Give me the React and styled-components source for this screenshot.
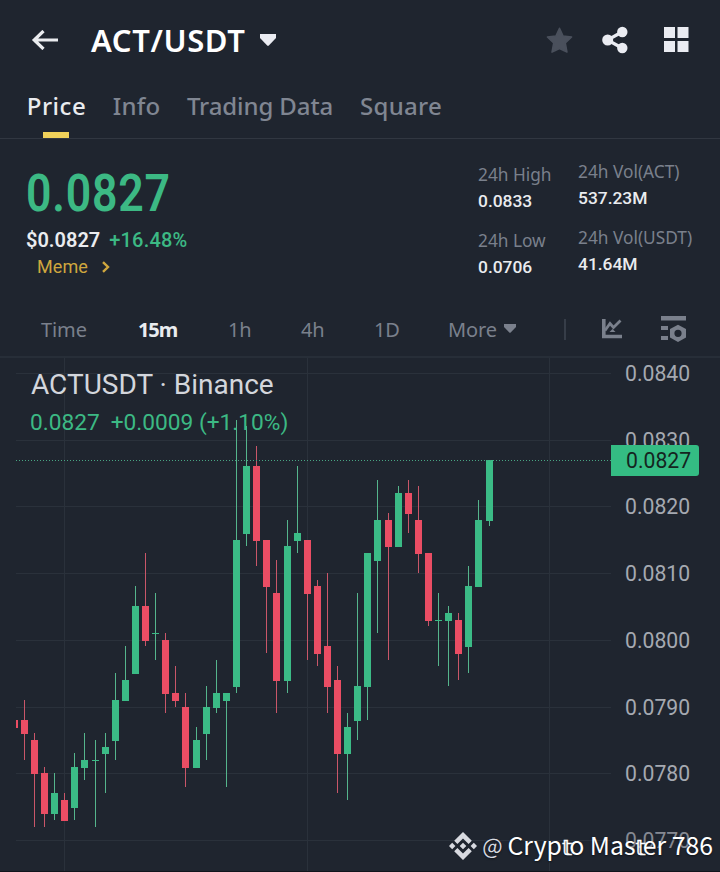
import styled, { createGlobalStyle } from "styled-components";

const GlobalStyle = createGlobalStyle`
    * {
        box-sizing: border-box;
    }
    body {
        margin: 0;
        background: #1f252f;
    }
`

const Page = styled.div`
    width: 720px;
    height: 872px;
    display: flex;
    flex-direction: column;
    overflow: hidden;
    background: #1f252f;
    color: #eaecef;
    font-family: 'Noto Sans', sans-serif;
    white-space: nowrap;
`

const Header = styled.header`
    height: 80px;
    display: flex;
    align-items: center;
    padding: 0 31px;
`

const Pair = styled.h1`
    width: 155px;
    margin: 0 14px 0 33px;
    font-size: 31px;
    line-height: 40px;
    font-weight: 600;
    letter-spacing: 0.6px;
    color: #fff;
`

const HeaderActions = styled.div`
    display: flex;
    align-items: center;
    gap: 29px;
    margin-left: auto;

    svg:last-child {
        margin-left: 7px;
    }
`

const Tabs = styled.nav`
    height: 59px;
    display: flex;
    gap: 27px;
    padding-left: 27px;
    border-bottom: 1px solid #313741;
`

const Tab = styled.div`
    width: ${props => props.$width}px;
    display: flex;
    flex-direction: column;
    justify-content: space-between;
    align-items: center;
    padding-top: 10px;
    font-size: 24px;
    line-height: 32px;
    font-weight: 500;
    letter-spacing: ${props => props.$spacing}px;
    color: ${props => props.$active ? '#eaecef' : '#808692'};
    &::after {
        content: '';
        width: 26px;
        height: 6px;
        margin-right: 2px;
        background: ${props => props.$active ? '#f0d15a' : 'transparent'};
    }
`

const Summary = styled.section`
    height: 163px;
    display: flex;
    justify-content: space-between;
    padding: 0 27px 0 26px;
    font-family: Roboto, sans-serif;
`

const LastPrice = styled.div`
    margin-top: 24px;
    font-size: 51px;
    line-height: 62px;
    font-weight: 600;
    letter-spacing: 0.9px;
    color: #3cb984;
    transform: scaleX(0.875);
    transform-origin: left;
`

const PriceLine = styled.div`
    display: flex;
    gap: 9px;
    margin-top: 3px;
    font-size: 20px;
    line-height: 24px;
    font-weight: 600;
`

const Change = styled.span`
    font-weight: 500;
    letter-spacing: 0.2px;
    color: #3cb984;
`

const Tag = styled.div`
    display: flex;
    align-items: center;
    gap: 14px;
    margin-top: 2px;
    padding-left: 11px;
    font-size: 18px;
    line-height: 26px;
    letter-spacing: 0.1px;
    color: #cfa73e;
`

const Stats = styled.div`
    display: flex;
    gap: 28px;
`

const StatColumn = styled.div`
    width: ${props => props.$width}px;
    display: flex;
    flex-direction: column;
    gap: 14px;
    padding-top: ${props => props.$top}px;
`

const StatLabel = styled.div`
    font-family: 'Noto Sans', sans-serif;
    font-size: 17.3px;
    line-height: 26px;
    color: #7a808c;
`

const StatValue = styled.div`
    font-size: 17.4px;
    line-height: 26px;
    font-weight: 500;
    color: #eaecef;
`

const Intervals = styled.div`
    height: 56px;
    display: flex;
    align-items: center;
    padding-left: 41px;
    border-bottom: 2px solid #272e38;
    font-size: 20px;
    color: #7a808c;
`

const Interval = styled.div`
    width: ${props => props.$width}px;
    display: flex;
    align-items: center;
    gap: 7px;
    padding-top: 1px;
    font-weight: ${props => props.$active ? 700 : 400};
    letter-spacing: ${props => props.$active ? -1.1 : -0.1}px;
    color: ${props => props.$active ? '#eaecef' : '#7a808c'};

    svg {
        margin-bottom: 2px;
    }
`

const Divider = styled.div`
    width: 2px;
    height: 21px;
    margin-right: 36px;
    background: #363d48;
`

const ChartArea = styled.section`
    position: relative;
    height: 514px;
    font-family: Roboto, sans-serif;
    border-bottom: 1px solid #11151c;

    svg {
        display: block;
    }
`

const Legend = styled.div`
    position: absolute;
    top: 9px;
    left: 30px;
`

const LegendTitle = styled.div`
    padding-left: 1px;
    font-size: 28px;
    line-height: 36px;
    color: #d3d6dc;
`

const LegendValues = styled.div`
    display: flex;
    gap: 11px;
    margin-top: 5px;
    font-size: 22.7px;
    line-height: 30px;
    color: #3cb984;
`

const Watermark = styled.div`
    position: absolute;
    right: 7px;
    bottom: 5px;
    display: flex;
    align-items: center;
    gap: 5px;
    font-family: 'Noto Sans CJK SC', sans-serif;
    font-size: 24.8px;
    line-height: 36px;
    color: #fff;
    text-shadow: 0 1px 2px #0008;
`

const At = styled.span`
    font-size: 21.5px;
    line-height: 32px;
    padding-bottom: 3px;
    color: #d8dae0;
`

const OddT = styled.span`
    font-family: 'DejaVu Sans', sans-serif;
    font-size: 22px;
    letter-spacing: -3px;
    -webkit-text-stroke: 0.5px #fff;
`

const tabs = [
    { label: 'Price', width: 59, spacing: 0.5 },
    { label: 'Info', width: 47, spacing: 0.2 },
    { label: 'Trading Data', width: 146, spacing: -0.1 },
    { label: 'Square', width: 82, spacing: 0.3 },
]

const intervals = [
    { label: 'Time', width: 97 },
    { label: '15m', width: 90 },
    { label: '1h', width: 73 },
    { label: '4h', width: 73 },
    { label: '1D', width: 74 },
]

// open, high, low, close in ticks of 0.0001
const candles = [
    [788, 788, 787, 787],
    [788, 791, 782, 786],
    [785, 786, 772, 780],
    [780, 781, 772, 774],
    [774, 780, 773, 777],
    [776, 777, 773, 773],
    [775, 783, 773, 781],
    [781, 786, 779, 782],
    [782, 785, 772, 782],
    [783, 786, 777, 784],
    [785, 795, 782, 791],
    [791, 799, 791, 794],
    [795, 808, 795, 805],
    [805, 813, 799, 800],
    [801, 807, 797, 801],
    [800, 801, 789, 792],
    [792, 796, 790, 791],
    [790, 792, 778, 781],
    [781, 787, 781, 785],
    [786, 793, 782, 790],
    [790, 797, 789, 792],
    [791, 792, 778, 792],
    [793, 833, 792, 815],
    [816, 832, 814, 826],
    [826, 829, 811, 815],
    [815, 815, 798, 808],
    [807, 812, 789, 794],
    [794, 818, 792, 814],
    [815, 826, 813, 816],
    [815, 815, 797, 807],
    [808, 809, 796, 798],
    [799, 810, 789, 793],
    [794, 796, 777, 783],
    [783, 789, 776, 787],
    [788, 807, 785, 793],
    [793, 813, 788, 813],
    [812, 824, 801, 818],
    [818, 819, 797, 814],
    [814, 823, 814, 822],
    [822, 824, 816, 819],
    [818, 823, 810, 813],
    [813, 813, 802, 803],
    [803, 807, 796, 803],
    [803, 805, 793, 804],
    [803, 804, 794, 798],
    [799, 811, 795, 808],
    [808, 821, 808, 818],
    [818, 827, 817, 827],
]

const levels = [840, 830, 820, 810, 800, 790, 780, 770]

const toX = index => Math.floor(24.272 + (index - 1) * 10.105)
const toY = price => Math.round(15 + (840 - price) * 6.67)

const Candle = ({ index, candle }) => {
    const [open, high, low, close] = candle
    const x = toX(index)
    const top = toY(Math.max(open, close))
    const bottom = toY(Math.min(open, close))
    const up = close >= open

    return (
        <g>
            <rect x={x} y={toY(high)} width="1" height={toY(low) - toY(high)} fill={up ? '#55b58c' : '#c95669'} />
            <rect x={x - 3} y={top} width="7" height={bottom - top + 1} fill={up ? '#3bbb86' : '#ea4d64'} />
        </g>
    )
}

const Chart = () => (
    <svg width="720" height="513">
        <defs>
            <clipPath id="plot"><rect x="16" y="0" width="595" height="513" /></clipPath>
        </defs>
        {levels.map(level => (
            <rect key={level} x="16" y={toY(level)} width="595" height="1" fill="#2a313b" />
        ))}
        {[64, 307, 549].map(x => (
            <rect key={x} x={x} y="0" width="1" height="513" fill="#2a313b" />
        ))}
        <g clipPath="url(#plot)">
            {candles.map((candle, index) => <Candle key={index} index={index} candle={candle} />)}
        </g>
        <line x1="16" x2="611" y1="102.5" y2="102.5" stroke="#48a583" strokeDasharray="1 2" />
        {levels.map(level => (
            <text key={level} x="625" y={toY(level) + 8} fontSize="21.2" fill={level === 770 ? '#858992' : '#a5a9b1'}>
                {(level / 10000).toFixed(4)}
            </text>
        ))}
        <path d="M611 87h85a3 3 0 0 1 3 3v25a3 3 0 0 1-3 3h-85z" fill="#34bc83" />
        <text x="626" y="110" fontSize="21.2" fill="#14251f">0.0827</text>
    </svg>
)

const BackIcon = () => (
    <svg width="27" height="20" viewBox="0 0 27 20" fill="none" stroke="#eaecef" strokeWidth="3.2">
        <path d="M27 10H3M12.5 1L3.2 10L12.5 19" />
    </svg>
)

const CaretIcon = ({ size, color }) => (
    <svg width={size} height={size * 0.75} viewBox="0 0 16 12">
        <path d="M0 0h16v4L8.6 11.8h-1.2L0 4z" fill={color} />
    </svg>
)

const StarIcon = () => (
    <svg width="27" height="28" viewBox="0 0 27 28">
        <path d="M13.5 2.2l3.6 7.9 8.5.9-6.3 5.9 1.7 9.2-7.5-3.6-7.5 3.6 1.7-9.2-6.3-5.900 8.5-.9z" fill="#4a505c" stroke="#4a505c" strokeWidth="1.5" strokeLinejoin="round" />
    </svg>
)

const ShareIcon = () => (
    <svg width="26" height="28" viewBox="0 0 26 28" fill="#eaecf2">
        <path d="M20 6L5.5 14L20 22" fill="none" stroke="#eaecf2" strokeWidth="3.2" />
        <circle cx="5.7" cy="14" r="5.5" />
        <circle cx="20.3" cy="6" r="5.2" />
        <circle cx="20.3" cy="22" r="5.2" />
    </svg>
)

const GridIcon = () => (
    <svg width="25" height="26" viewBox="0 0 25 26" fill="#eaecf2">
        <path d="M0 0h11v11H0zM13.5 0h11v11h-11zM0 14h11v11H0zM13.5 14h11v11h-11z" />
    </svg>
)

const ChevronIcon = () => (
    <svg width="8" height="12" viewBox="0 0 8 12" fill="none" stroke="#cfa73e" strokeWidth="2.4">
        <path d="M1 1.2L6 6L1 10.8" />
    </svg>
)

const IndicatorIcon = () => (
    <svg width="20" height="20" viewBox="0 0 20 20" fill="none" stroke="#7a808c">
        <path d="M1.8 0v17.5H20" strokeWidth="3.6" />
        <path d="M3 11.5L8 4.5L11.5 8.5L18.5 1.5" strokeWidth="2.8" />
        <path d="M7.5 13h6L10.5 10z" fill="#7a808c" stroke="none" />
    </svg>
)

const SettingsIcon = () => (
    <svg width="25" height="26" viewBox="0 0 25 26" fill="#7a808c">
        <path d="M0 0h25v4.5H0zM0 10h7v4H0zM0 20h7v4H0z" />
        <path fillRule="evenodd" d="M17 8.8L25 13v8.500L17 26l-8-4.500V13zM17 13.700a3.600 3.600 0 1 0 0 7.200 3.600 3.600 0 1 0 0-7.200z" />
    </svg>
)

const BinanceIcon = () => (
    <svg width="28" height="28" viewBox="0 0 28 28" fill="#d8dae0">
        <path d="M14 0l8.8 8.8-3.2 3.2L14 6.4 8.4 12 5.2 8.8z" />
        <path d="M14 28l8.8-8.8-3.2-3.2L14 21.6 8.4 16l-3.2 3.2z" />
        <path d="M14 10.7l3.3 3.3-3.3 3.3-3.3-3.3zM3.2 10.8L6.4 14l-3.2 3.2L0 14zM24.8 10.8L28 14l-3.2 3.2-3.2-3.2z" />
    </svg>
)

const IntervalTools = styled.div`
    display: flex;
    align-items: center;
    gap: 39px;
`

const App = () => (
    <Page>
        <GlobalStyle />
        <Header>
            <BackIcon />
            <Pair>ACT/USDT</Pair>
            <CaretIcon size={16} color="#eaecf2" />
            <HeaderActions>
                <StarIcon />
                <ShareIcon />
                <GridIcon />
            </HeaderActions>
        </Header>
        <Tabs>
            {tabs.map((tab, index) => (
                <Tab key={tab.label} $width={tab.width} $spacing={tab.spacing} $active={index === 0}>{tab.label}</Tab>
            ))}
        </Tabs>
        <Summary>
            <div>
                <LastPrice>0.0827</LastPrice>
                <PriceLine>$0.0827 <Change>+16.48%</Change></PriceLine>
                <Tag>Meme <ChevronIcon /></Tag>
            </div>
            <Stats>
                <StatColumn $width={72} $top={23}>
                    <div>
                        <StatLabel>24h High</StatLabel>
                        <StatValue>0.0833</StatValue>
                    </div>
                    <div>
                        <StatLabel>24h Low</StatLabel>
                        <StatValue>0.0706</StatValue>
                    </div>
                </StatColumn>
                <StatColumn $width={115} $top={20}>
                    <div>
                        <StatLabel>24h Vol(ACT)</StatLabel>
                        <StatValue>537.23M</StatValue>
                    </div>
                    <div>
                        <StatLabel>24h Vol(USDT)</StatLabel>
                        <StatValue>41.64M</StatValue>
                    </div>
                </StatColumn>
            </Stats>
        </Summary>
        <Intervals>
            {intervals.map(interval => (
                <Interval key={interval.label} $width={interval.width} $active={interval.label === '15m'}>
                    {interval.label}
                </Interval>
            ))}
            <Interval $width={116}>More <CaretIcon size={12} color="#7a808c" /></Interval>
            <Divider />
            <IntervalTools>
                <IndicatorIcon />
                <SettingsIcon />
            </IntervalTools>
        </Intervals>
        <ChartArea>
            <Chart />
            <Legend>
                <LegendTitle>ACTUSDT · Binance</LegendTitle>
                <LegendValues>
                    <span>0.0827</span>
                    <span>+0.0009 (+1.10%)</span>
                </LegendValues>
            </Legend>
            <Watermark>
                <BinanceIcon />
                <At>@</At>
                <span>Cryp<OddT>𝕥</OddT>o Mas<OddT>𝕥</OddT>er 786</span>
            </Watermark>
        </ChartArea>
    </Page>
)

export default App;
